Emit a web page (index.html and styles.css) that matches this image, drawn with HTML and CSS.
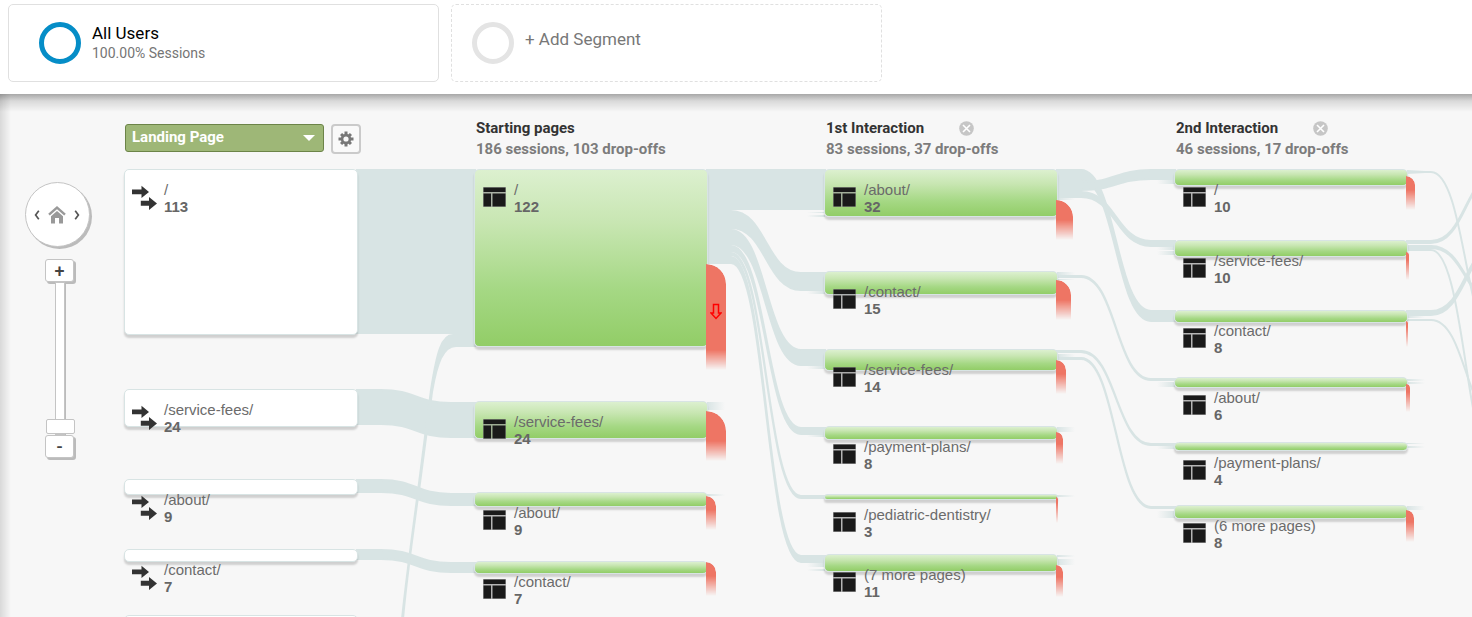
FILE: index.html
```html
<!DOCTYPE html>
<html lang="en">
<head>
<meta charset="utf-8">
<title>Behavior Flow</title>
<link rel="stylesheet" href="styles.css">
</head>
<body>
<header class="segments">
  <button class="segment" type="button">
    <span class="ring ring-active"></span>
    <span class="segment-text">
      <span class="segment-name">All Users</span>
      <span class="segment-share">100.00% Sessions</span>
    </span>
  </button>
  <button class="segment segment-add" type="button">
    <span class="ring"></span>
    <span class="segment-text">
      <span class="segment-name">+ Add Segment</span>
    </span>
  </button>
</header>

<main class="panel">
  <div class="column-heads">
    <div class="dimension">
      <label class="picker">
        <select class="picker-select" aria-label="Dimension">
          <option>Landing Page</option>
        </select>
      </label>
      <button class="gear" type="button" aria-label="Settings">
        <svg width="16" height="16" viewBox="0 0 16 16">
          <g fill="#777">
            <rect x="6.5" y="0.5" width="3" height="15"/>
            <rect x="0.5" y="6.5" width="15" height="3"/>
            <rect x="6.5" y="1" width="3" height="14" transform="rotate(45 8 8)"/>
            <rect x="6.5" y="1" width="3" height="14" transform="rotate(-45 8 8)"/>
            <circle cx="8" cy="8" r="5.2"/>
          </g>
          <circle cx="8" cy="8" r="2.6" fill="#f9f9f9"/>
        </svg>
      </button>
    </div>
    <section class="head">
      <h2 class="head-title">Starting pages</h2>
      <p class="head-stats">186 sessions, 103 drop-offs</p>
    </section>
    <section class="head">
      <h2 class="head-title">1st Interaction
        <button class="remove" type="button" aria-label="Remove step">
          <svg width="15" height="15" viewBox="0 0 15 15"><circle cx="7.5" cy="7.5" r="7.3" fill="#c6c6c6"/><path d="M4 4l7 7M11 4l-7 7" stroke="#fff" stroke-width="1.6"/></svg>
        </button>
      </h2>
      <p class="head-stats">83 sessions, 37 drop-offs</p>
    </section>
    <section class="head">
      <h2 class="head-title">2nd Interaction
        <button class="remove" type="button" aria-label="Remove step">
          <svg width="15" height="15" viewBox="0 0 15 15"><circle cx="7.5" cy="7.5" r="7.3" fill="#c6c6c6"/><path d="M4 4l7 7M11 4l-7 7" stroke="#fff" stroke-width="1.6"/></svg>
        </button>
      </h2>
      <p class="head-stats">46 sessions, 17 drop-offs</p>
    </section>
  </div>

  <div class="canvas" id="canvas">
    <svg class="links" id="links" width="1600" height="500" aria-hidden="true">
      <defs>
        <linearGradient id="fade-out"><stop offset="0" stop-color="#d8e4e4"/><stop offset="1" stop-color="#d8e4e4" stop-opacity="0"/></linearGradient>
        <linearGradient id="fade-in"><stop offset="0" stop-color="#d8e4e4" stop-opacity="0"/><stop offset="1" stop-color="#d8e4e4"/></linearGradient>
      </defs>
    </svg>

    <div class="controls">
      <div class="pan">
        <button class="pan-step" type="button" aria-label="Pan left"><svg width="6" height="10" viewBox="0 0 6 10"><path d="M4.8 .8L1.6 5l3.2 4.2" fill="none" stroke="#555" stroke-width="1.7"/></svg></button>
        <button class="pan-home" type="button" aria-label="Home"><svg width="18" height="18" viewBox="0 0 18 18"><path d="M1 8.7L9 1.7l8 7" fill="none" stroke="#999" stroke-width="2.4"/><path d="M3 10.200L9 5l6 5.200V17.500H11V12H7V17.500H3z" fill="#999"/></svg></button>
        <button class="pan-step" type="button" aria-label="Pan right"><svg width="6" height="10" viewBox="0 0 6 10"><path d="M1.200 .8L4.400 5L1.200 9.200" fill="none" stroke="#555" stroke-width="1.7"/></svg></button>
      </div>
      <button class="zoom-step" type="button">+</button>
      <input class="zoom-range" type="range" min="0" max="10" value="10" aria-label="Zoom">
      <button class="zoom-step" type="button">-</button>
    </div>
  </div>
</main>
<script src="flow.js"></script>
</body>
</html>
```

FILE: styles.css
```css
* {
  box-sizing: border-box;
}

body {
  margin: 0;
  height: 100vh;
  display: flex;
  flex-direction: column;
  overflow: hidden;
  background: #fff;
  color: #333;
  font-family: Roboto, "Liberation Sans", sans-serif;
}

button {
  margin: 0;
  padding: 0;
  border: 0;
  background: none;
  font: inherit;
  color: inherit;
  cursor: pointer;
}

svg {
  display: block;
}

/* Segment bar */

.segments {
  display: flex;
  gap: 12px;
  padding: 4px 8px 12px;
}

.segment {
  flex: 0 1 431px;
  display: flex;
  align-items: flex-start;
  gap: 11px;
  height: 78px;
  padding: 17px 30px;
  border: 1px solid #e0e0e0;
  border-radius: 5px;
  text-align: left;
}

.segment-add {
  padding: 17px 20px;
  border-style: dashed;
}

.ring {
  width: 42px;
  height: 42px;
  border: 5px solid #e4e4e4;
  border-radius: 50%;
}

.ring-active {
  border-color: #058dc7;
}

.segment-text {
  display: flex;
  flex-direction: column;
}

.segment-name {
  font-size: 17px;
  line-height: 22px;
  color: #000;
}

.segment-share {
  font-size: 14px;
  line-height: 18px;
  color: #757575;
}

.segment-add .segment-name {
  padding-top: 6px;
  color: #777;
}

/* Flow panel */

.panel {
  flex: 1;
  display: flex;
  flex-direction: column;
  min-height: 0;
  background:
    linear-gradient(to bottom, rgba(0, 0, 0, .32), rgba(0, 0, 0, .12) 7px, rgba(0, 0, 0, 0) 18px),
    linear-gradient(to right, rgba(0, 0, 0, .12), rgba(0, 0, 0, 0) 11px),
    #f7f7f7;
}

.column-heads {
  display: grid;
  grid-template-columns: 351px 350px 350px 1fr;
  height: 75px;
  padding: 24px 0 0 125px;
}

.dimension {
  display: flex;
  align-items: flex-start;
  gap: 7px;
  padding-top: 6px;
}

.picker {
  position: relative;
  width: 199px;
}

.picker::after {
  content: "";
  position: absolute;
  top: 11px;
  right: 9px;
  border: 6px solid transparent;
  border-top-color: #fff;
  border-bottom-width: 0;
  pointer-events: none;
}

.picker-select {
  display: block;
  appearance: none;
  width: 100%;
  height: 28px;
  padding: 0 6px 2px;
  border: 1px solid #6c8448;
  border-radius: 3px;
  background: #9eb777;
  color: #fff;
  font: bold 15px Roboto, sans-serif;
}

.gear {
  display: grid;
  place-items: center;
  width: 30px;
  height: 30px;
  border: 2px solid #cacaca;
  border-radius: 4px;
  background: #f9f9f9;
}

.head-title {
  display: flex;
  align-items: center;
  gap: 35px;
  margin: 0;
  font-size: 15px;
  font-weight: bold;
  line-height: 21px;
}

.head-stats {
  margin: 0;
  font-size: 15px;
  font-weight: bold;
  line-height: 21px;
  color: #7c7c7c;
}

/* Flow canvas */

.canvas {
  position: relative;
  flex: 1;
  min-height: 0;
  overflow: hidden;
}

.links {
  position: absolute;
  top: 0;
  left: 0;
}

.link {
  fill: #d8e4e4;
  stroke: #d8e4e4;
  stroke-width: 2px;
}

.node {
  position: absolute;
  width: 234px;
  border: 1px solid #d8e4e4;
  border-radius: 5px;
  background: #fff;
  box-shadow: 0 3px 2px rgba(0, 0, 0, .16);
}

.node-page {
  background: linear-gradient(#dcf0cf, #c8e6b2 30%, #a5d884 68%, #92cd67);
}

.node-label {
  position: absolute;
  display: flex;
  gap: 7px;
  padding: 12px 8px;
  font-family: "Liberation Sans", Arial, sans-serif;
  font-size: 15px;
  line-height: 17px;
  color: #6b6b6b;
  white-space: nowrap;
}

.node-icon {
  width: 25px;
  padding-top: 4px;
}

.node-name,
.node-count {
  display: block;
}

.node-count {
  color: #666;
  font-weight: bold;
}

.drop {
  position: absolute;
  border-top-right-radius: 20px;
  background: #ee7564;
  mask-image: linear-gradient(to top, transparent, #000 20px);
}

.drop-arrow {
  position: absolute;
}

/* Pan and zoom controls */

.controls {
  position: absolute;
  top: 13px;
  left: 25px;
  display: flex;
  flex-direction: column;
  align-items: center;
}

.pan {
  display: flex;
  align-items: center;
  justify-content: center;
  gap: 8px;
  width: 65px;
  height: 65px;
  margin: 0 4px 12px 0;
  padding-right: 2px;
  border: 1px solid #c4c4c4;
  border-radius: 50%;
  background: #fff;
  box-shadow: 2px 2px 0 #bbb;
}

.zoom-step {
  width: 29px;
  height: 23px;
  border: 1px solid #c4c4c4;
  border-radius: 3px;
  background: #fff;
  box-shadow: 2px 2px 0 #bbb;
  color: #444;
  font-size: 18px;
  font-weight: 500;
  line-height: 20px;
}

.zoom-range {
  appearance: none;
  writing-mode: vertical-lr;
  width: 29px;
  height: 153px;
  margin: 0;
  background: none;
}

.zoom-range::-webkit-slider-runnable-track {
  width: 10px;
  border: 1px solid #c4c4c4;
  background: #fff;
  box-shadow: 1px 0 0 #bbb;
}

.zoom-range::-webkit-slider-thumb {
  appearance: none;
  width: 29px;
  height: 15px;
  margin-left: -10px;
  border: 1px solid #c4c4c4;
  border-radius: 2px;
  background: #fff;
}
```

FILE: flow.js
```js
const NODE_WIDTH = 233;
const COLUMN_X = [124, 474, 824, 1174];
const STUB = 24;
const SVG_NS = "http://www.w3.org/2000/svg";

// Each node: [column, top, height, name, sessions, drop-off [top, width, height]]
// A node without a name is only partly in view and has no label.
const nodes = [
  [0, 0, 166, "/", 113],
  [0, 220, 38, "/service-fees/", 24],
  [0, 310, 16, "/about/", 9],
  [0, 380, 13, "/contact/", 7],
  [0, 446, 12, "", 0],
  [1, 0, 178, "/", 122, [95, 20, 106]],
  [1, 232, 38, "/service-fees/", 24, [242, 20, 50]],
  [1, 323, 15, "/about/", 9, [327, 10, 34]],
  [1, 392, 13, "/contact/", 7, [393, 10, 34]],
  [2, 0, 48, "/about/", 32, [31, 17, 40]],
  [2, 102, 24, "/contact/", 15, [111, 15, 40]],
  [2, 180, 22, "/service-fees/", 14, [191, 10, 34]],
  [2, 257, 14, "/payment-plans/", 8, [263, 7, 32]],
  [2, 325, 6, "/pediatric-dentistry/", 3, [328, 2, 26]],
  [2, 385, 18, "(7 more pages)", 11, [396, 7, 32]],
  [3, 0, 17, "/", 10, [7, 9, 34]],
  [3, 71, 17, "/service-fees/", 10, [83, 3, 28]],
  [3, 141, 13, "/contact/", 8, [152, 2, 26]],
  [3, 208, 11, "/about/", 6, [215, 4, 28]],
  [3, 273, 9, "/payment-plans/", 4],
  [3, 336, 14, "(6 more pages)", 8, [341, 8, 32]]
];

// Each link: [from column, y, thickness, y in next column, thickness]
const links = [
  [0, 0, 165, 0, 165],
  [0, 220, 36, 233, 36],
  [0, 310, 14, 324, 13],
  [0, 380, 11, 393, 11],
  [1, 0, 41, 0, 41],
  [1, 41, 19, 103, 19],
  [1, 60, 16, 180, 17],
  [1, 76, 7, 258, 8],
  [1, 83, 4, 326, 4],
  [1, 87, 8, 386, 8],
  [2, 0, 12, 141, 12],
  [2, 12, 10, 0, 11],
  [2, 22, 7, 71, 7],
  [2, 106, 3, 209, 3],
  [2, 181, 3, 274, 3],
  [2, 188, 3, 337, 3],
  [3, 2, 2, 183, 2],
  [3, 71, 4, 0, 4],
  [3, 76, 4, 135, 4],
  [3, 80, 2, 310, 2],
  [3, 141, 6, 71, 6],
  [3, 150, 2, 254, 2]
];

// Faded stubs of minor traffic: [column, side, top, height]
const stubs = [
  [1, "out", 233, 8], [1, "out", 325, 2],
  [2, "in", 43, 1], [2, "in", 46, 2], [2, "in", 122, 3], [2, "in", 197, 3],
  [2, "in", 265, 3], [2, "in", 394, 4], [2, "in", 400, 2],
  [2, "out", 29, 2], [2, "out", 103, 3], [2, "out", 110, 1], [2, "out", 185, 3],
  [2, "out", 258, 5], [2, "out", 326, 2], [2, "out", 386, 2], [2, "out", 390, 6],
  [3, "in", 11, 4], [3, "in", 78, 3], [3, "in", 82, 4], [3, "in", 213, 5],
  [3, "in", 277, 3], [3, "in", 342, 7],
  [3, "out", 1, 4], [3, "out", 147, 2], [3, "out", 210, 2], [3, "out", 213, 2],
  [3, "out", 274, 1], [3, "out", 277, 2], [3, "out", 337, 4]
];

const entryIcon = '<svg width="25" height="25" viewBox="0 0 25 25" fill="#333"><path d="M0 4.500H9.500V.8L17 7L9.500 13V9.300H0z"/><path d="M8.800 15.800H17V12L25 18.500L17 25V20.700H8.800z"/></svg>';
const pageIcon = '<svg width="24" height="24" viewBox="0 0 24 24" fill="#1a1a1a"><rect x="1" y="2" width="23" height="20" fill="#999" fill-opacity=".7"/><path d="M1.500 2.500H23.500V7H1.500zM1.500 8.500H9V21.500H1.500zM10.500 8.500H23.500V21.500H10.500z"/></svg>';

const canvas = document.getElementById("canvas");
const svg = document.getElementById("links");

function addShape(tag, attributes) {
  const shape = document.createElementNS(SVG_NS, tag);
  for (const [key, value] of Object.entries(attributes)) {
    shape.setAttribute(key, value);
  }
  svg.append(shape);
}

function addBox(className, box, html = "") {
  const element = document.createElement("div");
  element.className = className;
  element.innerHTML = html;
  for (const [key, value] of Object.entries(box)) {
    element.style[key] = value + "px";
  }
  canvas.append(element);
}

// The outline adds one pixel on each side, so each edge is inset by one.
for (const [column, y0, h0, y1, h1] of links) {
  const start = COLUMN_X[column] + NODE_WIDTH;
  const end = COLUMN_X[column] + 351;
  const a = start + STUB;
  const b = end - STUB;
  const mid = (a + b) / 2;
  const top0 = y0 + 1;
  const top1 = y1 + 1;
  const bottom0 = y0 + h0 - 1;
  const bottom1 = y1 + h1 - 1;
  addShape("path", {
    class: "link",
    d: `M${start} ${top0}H${a}C${mid} ${top0} ${mid} ${top1} ${b} ${top1}H${end}V${bottom1}H${b}` +
       `C${mid} ${bottom1} ${mid} ${bottom0} ${a} ${bottom0}H${start}Z`
  });
}

// Traffic that rises from a landing page below the visible area
addShape("path", {
  class: "link",
  d: "M402 450C407 402 415 346 419 314L431 221C437 182 442 166 453 166H475V177H456C443 177 437 194 432 223L420 314C415 350 407 405 403 450Z"
});

for (const [column, side, y, height] of stubs) {
  const x = side === "in" ? COLUMN_X[column] - 17 : COLUMN_X[column] + NODE_WIDTH;
  addShape("rect", { x, y, width: 18, height, fill: `url(#fade-${side})` });
}

for (const [column, top, height, name, count, drop] of nodes) {
  const left = COLUMN_X[column];
  addBox(column ? "node node-page" : "node", { left, top, height });
  if (drop) {
    addBox("drop", { left: left + NODE_WIDTH - 1, top: drop[0], width: drop[1], height: drop[2] });
  }
  if (name) {
    addBox("node-label", { left, top },
      `<span class="node-icon">${column ? pageIcon : entryIcon}</span>` +
      `<span><span class="node-name">${name}</span><span class="node-count">${count}</span></span>`);
  }
}

addBox("drop-arrow", { left: 710, top: 134 },
  '<svg width="12" height="17" viewBox="0 0 12 17"><path d="M3.500 1.500H8.500V10H11L6 15.500L1 10H3.500z" fill="none" stroke="#f00" stroke-width="1.500"/></svg>');
```
